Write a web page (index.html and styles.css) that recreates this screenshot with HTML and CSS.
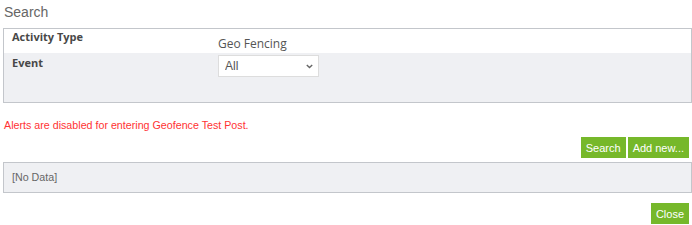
FILE: index.html
```html
<!DOCTYPE html>
<html lang="en">
<head>
  <meta charset="UTF-8" />
  <title>Search</title>
  <link rel="stylesheet" href="styles.css">
</head>
<body>

  <!-- Search panel -->
  <h2 class="title">Search</h2>

  <div class="search-box">
    <div class="row">
      <div class="label">Activity Type</div>
      <div class="value value-text">Geo Fencing</div>
    </div>
    <div class="row row-alt">
      <div class="label label-alt">Event</div>
      <div class="value value-select">
        <div class="select-wrap">
          <select class="event-select">
            <option>All</option>
          </select>
          <svg class="chevron" width="7" height="5" viewBox="0 0 7 5">
            <path d="M0.8 1 L3.5 3.6 L6.2 1" fill="none" stroke="#666" stroke-width="1.4"/>
          </svg>
        </div>
      </div>
    </div>
  </div>

  <div class="alert">Alerts are disabled for entering Geofence Test Post.</div>

  <div class="actions">
    <button class="btn">Search</button>
    <button class="btn">Add new...</button>
  </div>

  <div class="grid-empty">[No Data]</div>

  <div class="actions actions-close">
    <button class="btn">Close</button>
  </div>

</body>
</html>
```

FILE: styles.css
```css
body {
  margin: 0;
  padding: 0 0 0 3px;
  font-family: "Open Sans", sans-serif;
  background: #fff;
  color: #555;
}

.title {
  margin: 0;
  height: 28px;
  padding-left: 1px;
  font-family: "Liberation Sans", Arial, sans-serif;
  font-weight: normal;
  font-size: 14px;
  line-height: 24px;
  color: #666;
}

/* Search box */
.search-box {
  border: 1px solid #c3c6cb;
}

.row {
  display: flex;
  height: 24px;
  background: #fff;
}

.row-alt {
  height: 49px;
  background: #eff0f3;
}

.label {
  width: 206px;
  padding-left: 8px;
  font-size: 11px;
  font-weight: bold;
  line-height: 15px;
  color: #484848;
}

.label-alt {
  padding-top: 2px;
}

.value-text {
  padding-top: 7px;
  font-size: 12px;
  line-height: 16px;
  color: #555;
}

.value-select {
  padding-top: 2px;
}

.select-wrap {
  position: relative;
  width: 101px;
}

.event-select {
  appearance: none;
  -webkit-appearance: none;
  display: block;
  width: 101px;
  height: 22px;
  padding: 0 6px;
  border: 1px solid #ddd;
  border-radius: 0;
  background: #fff;
  font-family: "Liberation Sans", Arial, sans-serif;
  font-size: 12px;
  color: #555;
}

.chevron {
  position: absolute;
  right: 6px;
  top: 9px;
  pointer-events: none;
}

/* Alert */
.alert {
  margin-top: 16px;
  padding-left: 1px;
  font-family: "Liberation Sans", Arial, sans-serif;
  font-size: 10.7px;
  line-height: 13px;
  color: #f33;
}

/* Buttons */
.actions {
  display: flex;
  justify-content: flex-end;
  gap: 2px;
  margin-top: 5px;
  margin-right: 3px;
}

.actions-close {
  margin-top: 10px;
}

.btn {
  height: 21px;
  padding: 0 5px;
  border: none;
  background: #76b82a;
  color: #fff;
  font-family: "Liberation Sans", Arial, sans-serif;
  font-size: 11px;
  cursor: pointer;
}

.btn:hover {
  background: #5e9a1e;
}

/* Empty grid */
.grid-empty {
  margin-top: 4px;
  height: 29px;
  padding-left: 8px;
  border: 1px solid #c3c6cb;
  background: #eff0f3;
  font-family: "Liberation Sans", Arial, sans-serif;
  font-size: 10.7px;
  line-height: 29px;
  color: #666;
}
```
